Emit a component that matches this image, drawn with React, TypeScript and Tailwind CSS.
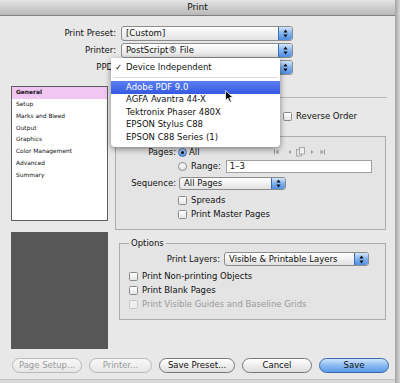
import type { ReactNode } from 'react'

function Stepper() {
	return (
		<div className="flex w-[14px] shrink-0 items-center justify-center rounded-r-[3px] border-l border-[#3d6cb8] bg-gradient-to-b from-[#d3e6fc] via-[#80b2ef] to-[#4e8de2]">
			<svg width="5" height="9" viewBox="0 0 5 9">
				<path d="M2.5 0.5L4.6 3.6H0.4Z M2.5 8.5L4.6 5.4H0.4Z" fill="#111" />
			</svg>
		</div>
	)
}

function Select({ value, className }: { value: string; className: string }) {
	return (
		<div
			className={`flex items-stretch rounded-[3px] border border-[#8c8c8c] bg-gradient-to-b from-white to-[#e2e2e2] ${className}`}
		>
			<span className="flex flex-1 items-center truncate pl-[4px]">{value}</span>
			<Stepper />
		</div>
	)
}

function Check({ disabled }: { disabled?: boolean }) {
	return (
		<span
			className={`inline-block h-[9px] w-[9px] shrink-0 rounded-[1.5px] border ${
				disabled ? 'border-[#c6c6c6] bg-[#efefef]' : 'border-[#8a8a8a] bg-gradient-to-b from-white to-[#e6e6e6]'
			}`}
		/>
	)
}

function Radio({ on }: { on?: boolean }) {
	if (on)
		return (
			<span className="flex h-[9px] w-[9px] shrink-0 items-center justify-center rounded-full border border-[#3f6db5] bg-gradient-to-b from-[#b9d6f8] to-[#5a96e6]">
				<span className="h-[3px] w-[3px] rounded-full bg-[#111]" />
			</span>
		)
	return <span className="h-[9px] w-[9px] shrink-0 rounded-full border border-[#8a8a8a] bg-gradient-to-b from-white to-[#e4e4e4]" />
}

function CheckRow({ label, disabled }: { label: string; disabled?: boolean }) {
	return (
		<div className={`flex h-[14px] items-center gap-[4px] ${disabled ? 'text-[#9a9a9a]' : ''}`}>
			<Check disabled={disabled} />
			<span>{label}</span>
		</div>
	)
}

function Button({ children, className }: { children: ReactNode; className: string }) {
	return (
		<div className={`flex h-[15px] items-center justify-center rounded-full border ${className}`}>{children}</div>
	)
}

function PageNav() {
	return (
		<svg width="54" height="10" viewBox="0 0 54 10" className="mr-[57px] ml-auto">
			<g fill="#9a9a9a">
				<rect x="0" y="2.5" width="1" height="5" />
				<path d="M4.5 2.5L1.5 5L4.5 7.5Z" />
				<path d="M17 3L14.5 5L17 7Z" />
				<path d="M37 3L39.5 5L37 7Z" />
				<path d="M46.5 2.5L49.5 5L46.5 7.5Z" />
				<rect x="50" y="2.5" width="1" height="5" />
			</g>
			<rect x="22.5" y="2.5" width="5" height="6.5" fill="none" stroke="#9a9a9a" strokeWidth="0.8" />
			<rect x="25.5" y="0.5" width="5" height="6.5" fill="#eee" stroke="#9a9a9a" strokeWidth="0.8" />
		</svg>
	)
}

const panels = ['General', 'Setup', 'Marks and Bleed', 'Output', 'Graphics', 'Color Management', 'Advanced', 'Summary']
const ppds = ['AGFA Avantra 44-X', 'Tektronix Phaser 480X', 'EPSON Stylus C88', 'EPSON C88 Series (1)']

export default function App() {
	return (
		<div className="flex h-[383px] w-[400px] overflow-hidden bg-[#cfcfcf] font-['DejaVu_Sans',sans-serif] text-[8.5px] leading-[11px] text-[#111]">
			<div className="relative flex w-[395px] flex-col bg-[#e8e8e8]">
				{/* title bar */}
				<div className="flex h-[16px] shrink-0 items-center justify-center rounded-t-[4px] border-b border-[#808080] bg-gradient-to-b from-[#e4e4e4] to-[#b8b8b8] text-[9px]">
					Print
				</div>

				{/* preset / printer / ppd */}
				<div className="mt-[10px] grid grid-cols-[116px_172px] items-center gap-x-[5px] gap-y-[2px]">
					<span className="text-right">Print Preset:</span>
					<Select value="[Custom]" className="h-[15px]" />
					<span className="text-right">Printer:</span>
					<Select value="PostScript® File" className="h-[15px]" />
					<span className="text-right">PPD:</span>
					<Select value="Device Independent" className="h-[15px]" />
				</div>

				<div className="mt-[11px] flex gap-[7px] pl-[11px]">
					{/* left column */}
					<div className="flex w-[97px] flex-col">
						<div className="h-[135px] border border-[#5e5e5e] bg-white text-[5.9px]">
							{panels.map((p, i) => (
								<div
									key={p}
									className={`flex h-[11.75px] items-center pl-[4px] ${i === 0 ? 'bg-[#f1c6f3] font-bold' : ''}`}
								>
									{p}
								</div>
							))}
						</div>
						<div className="mt-[11px] h-[117px] bg-[#575757]" />
					</div>

					{/* right column */}
					<div className="flex w-[272px] flex-col pt-[11px]">
						<div className="h-px bg-[#b8b8b8]" />
						<div className="mt-[11px] flex h-[14px] items-center pl-[168px]">
							<div className="flex items-center gap-[4px]">
								<Check />
								<span>Reverse Order</span>
							</div>
						</div>

						{/* pages box */}
						<div className="mt-[13px] h-[94px] w-[271px] border border-[#acacac] bg-black/[0.015] pt-[8px]">
							<div className="grid grid-cols-[60px_1fr] items-center gap-x-[3px]">
								<span className="text-right">Pages:</span>
								<div className="-ml-px flex h-[14px] items-center gap-[2px]">
									<Radio on />
									<span>All</span>
									<PageNav />
								</div>
								<span />
								<div className="-ml-px flex h-[14px] items-center">
									<Radio />
									<span className="ml-[4px]">Range:</span>
									<span className="ml-[5px] flex h-[13px] w-[146px] items-center border border-[#a0a0a0] bg-white pl-[3px]">
										1–3
									</span>
								</div>
								<span className="mt-[3px] text-right">Sequence:</span>
								<div className="mt-[3px] flex h-[14px] items-center">
									<Select value="All Pages" className="h-[13px] w-[107px]" />
								</div>
								<span />
								<div className="-ml-px mt-[3px]">
									<CheckRow label="Spreads" />
									<CheckRow label="Print Master Pages" />
								</div>
							</div>
						</div>

						{/* options box */}
						<fieldset className="mt-[8px] ml-[4px] w-[267px] border border-[#acacac] bg-black/[0.015] pb-[8px]">
							<legend className="ml-[9px] px-[2px] leading-[10px]">Options</legend>
							<div className="grid grid-cols-[100px_145px] items-center gap-x-[4px] pt-[4px]">
								<span className="text-right">Print Layers:</span>
								<Select value="Visible & Printable Layers" className="h-[14px]" />
							</div>
							<div className="mt-[3px] pl-[9px]">
								<CheckRow label="Print Non-printing Objects" />
								<CheckRow label="Print Blank Pages" />
								<CheckRow label="Print Visible Guides and Baseline Grids" disabled />
							</div>
						</fieldset>
					</div>
				</div>

				{/* buttons */}
				<div className="mt-[9px] flex gap-[7px] pl-[12px]">
					<Button className="w-[70px] border-[#b8b8b8] bg-gradient-to-b from-[#f8f8f8] to-[#e6e6e6] text-[#9a9a9a]">
						Page Setup...
					</Button>
					<Button className="w-[63px] border-[#b8b8b8] bg-gradient-to-b from-[#f8f8f8] to-[#e6e6e6] text-[#9a9a9a]">
						Printer...
					</Button>
					<Button className="w-[76px] border-[#777] bg-gradient-to-b from-white to-[#dedede]">Save Preset...</Button>
					<Button className="w-[70px] border-[#777] bg-gradient-to-b from-white to-[#dedede]">Cancel</Button>
					<Button className="w-[70px] border-[#3a68b0] bg-gradient-to-b from-[#cfe4fb] via-[#8bbaf0] to-[#5b9be6]">
						Save
					</Button>
				</div>

				<div className="flex-1" />
				<div className="h-[4px] border-t border-[#c2c2c2] bg-[#d8d8d8]" />

				{/* open PPD menu */}
				<div className="absolute top-[58px] left-[111px] w-[169px] rounded-b-[4px] bg-white pt-[3px] pb-[3.5px] shadow-[0_2px_6px_rgba(0,0,0,0.45)]">
					<div className="flex h-[13px] items-center">
						<span className="w-[15px] text-center">✓</span>
						<span>Device Independent</span>
					</div>
					<div className="flex h-[7px] items-center px-[3px]">
						<div className="h-px w-full bg-[#dadada]" />
					</div>
					<div className="flex h-[12.5px] items-center bg-gradient-to-b from-[#5c7ff0] to-[#3558e0] pl-[15px] text-white">
						Adobe PDF 9.0
					</div>
					{ppds.map((p) => (
						<div key={p} className="flex h-[12.5px] items-center pl-[15px]">
							{p}
						</div>
					))}
				</div>

				{/* mouse pointer */}
				<svg className="absolute top-[90px] left-[225px]" width="9" height="13" viewBox="0 0 9 13">
					<path
						d="M0.6 0.6L0.6 10.4L3 8.2L4.8 12.2L6.4 11.5L4.7 7.6L8 7.6Z"
						fill="#000"
						stroke="#fff"
						strokeWidth="0.8"
						strokeLinejoin="round"
					/>
				</svg>
			</div>
			<div className="w-[5px] bg-gradient-to-r from-[#a4a4a4] to-[#d6d6d6]" />
		</div>
	)
}
